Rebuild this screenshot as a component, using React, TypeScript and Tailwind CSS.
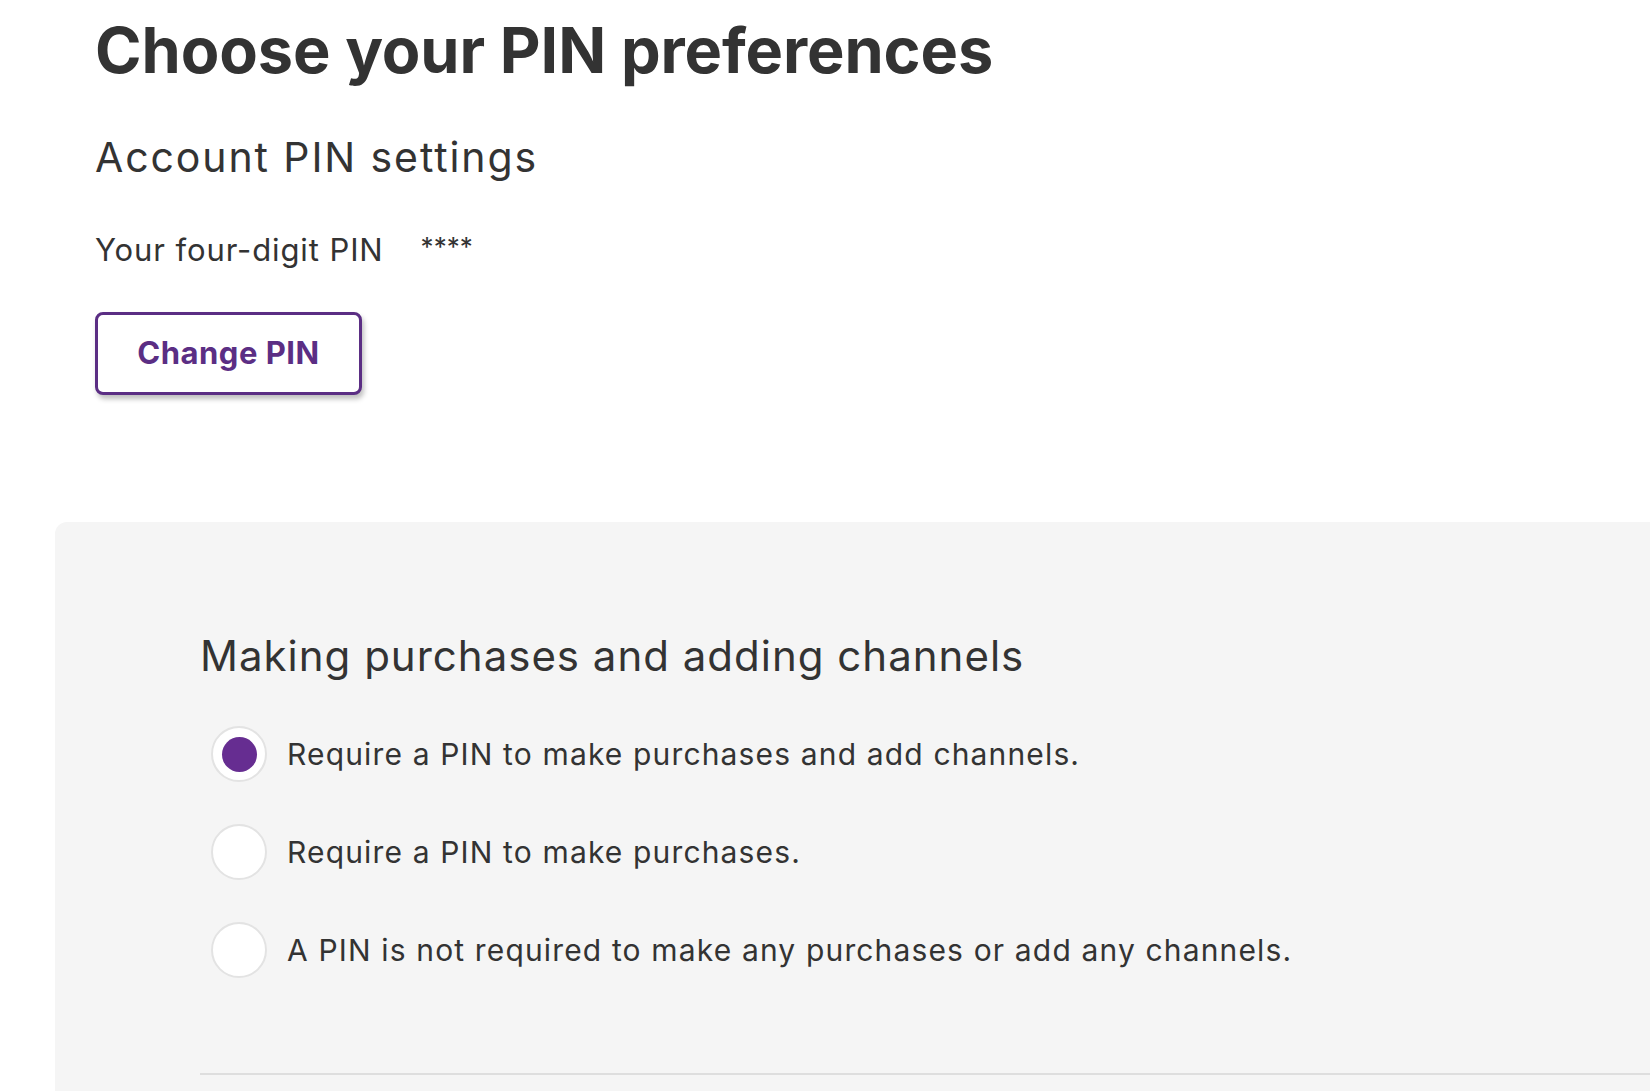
export default function App() {
  const options = [
    { label: "Require a PIN to make purchases and add channels.", checked: true },
    { label: "Require a PIN to make purchases.", checked: false },
    { label: "A PIN is not required to make any purchases or add any channels.", checked: false },
  ];
  return (
    <div className="w-[1650px] h-[1091px] overflow-hidden bg-white text-[#333333] font-[Inter,sans-serif]">
      <div className="pl-[95px] pt-[19px]">
        <h1 className="text-[63px] font-bold leading-none tracking-[-0.1px]">Choose your PIN preferences</h1>
        <h2 className="mt-[55px] text-[41px] font-normal leading-none tracking-[1.9px]">Account PIN settings</h2>
        <div className="mt-[56px] flex items-start">
          <span className="text-[31px] leading-none tracking-[0.9px]">Your four-digit PIN</span>
          <span className="ml-[37px] text-[26px] leading-none">****</span>
        </div>
        <button className="mt-[47px] flex h-[83px] w-[267px] items-center justify-center rounded-[8px] border-[3px] border-[#5b2e84] bg-white text-[31px] font-bold tracking-[0.5px] text-[#5b2e84] shadow-[2px_4px_5px_rgba(0,0,0,0.25)]">
          Change PIN
        </button>
      </div>
      <div className="ml-[55px] mt-[127px] h-[600px] rounded-tl-[12px] bg-[#f5f5f5] pt-[113px]">
        <h3 className="pl-[145px] text-[42px] font-normal leading-none tracking-[1px]">Making purchases and adding channels</h3>
        <div className="mt-[49px] flex flex-col gap-[42px] pl-[156px]">
          {options.map((o) => (
            <label key={o.label} className="flex items-center gap-[20px]">
              <span className="flex h-[56px] w-[56px] shrink-0 items-center justify-center rounded-full border-[2px] border-[#e3e3e3] bg-white">
                {o.checked && <span className="h-[35px] w-[35px] rounded-full bg-[#662d91]" />}
              </span>
              <span className="text-[30px] leading-none tracking-[1.15px]">{o.label}</span>
            </label>
          ))}
        </div>
        <div className="ml-[145px] mt-[95px] h-[2px] bg-[#dedede]" />
      </div>
    </div>
  );
}
